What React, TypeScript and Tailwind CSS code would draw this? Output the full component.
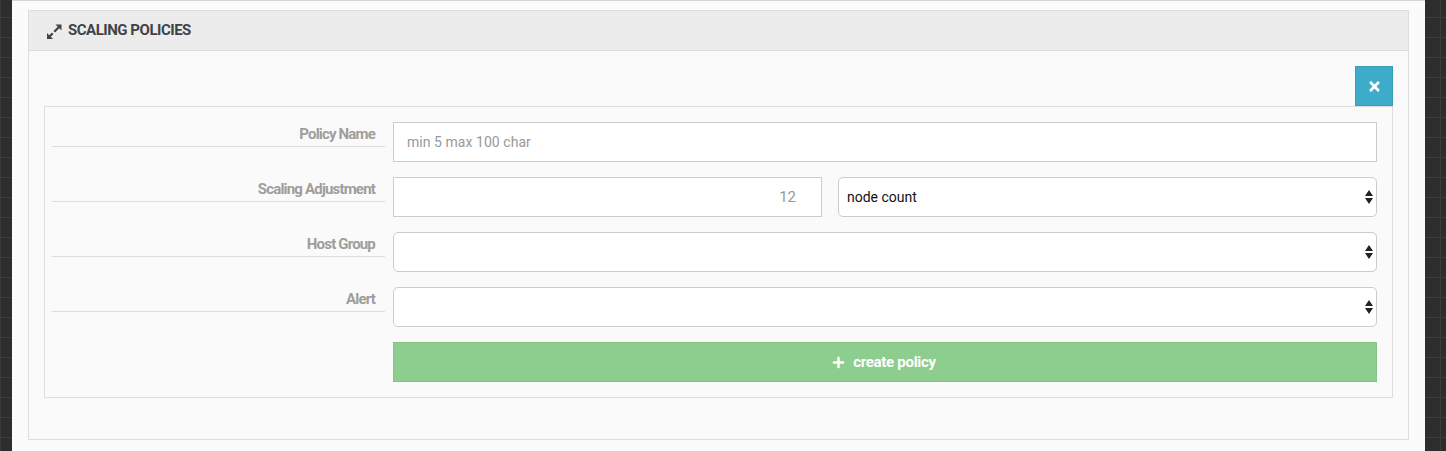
import { FaTimes, FaPlus } from "react-icons/fa";

function Arrows() {
  return (
    <svg className="block translate-y-[0.5px]" width="16" height="16" viewBox="0 0 16 16" fill="none">
      <path d="M9.5 1H15.5V7L13.3 4.8 4.8 13.3 7 15.5H1V9.5L3.2 11.7 11.7 3.2z" fill="#444" />
      <path d="M5.5 7 9 10.5" stroke="#ececec" strokeWidth="2.2" />
    </svg>
  );
}

function Label({ children }: { children: string }) {
  return (
    <div className="w-[333px] h-[25px] shrink-0 border-b border-[#ddd] pr-[10px] text-right text-[15px] leading-[24px] font-bold text-[#a09e9b] tracking-[-0.82px]">
      {children}
    </div>
  );
}

function Select({ value, className }: { value?: string; className: string }) {
  return (
    <div className={"relative h-10 " + className}>
      <select
        defaultValue={value ?? ""}
        className="block w-full h-full appearance-none bg-white border border-[#ccc] rounded-[5px] pl-2 text-[14px] text-[#111] outline-none"
      >
        <option value={value ?? ""}>{value ?? ""}</option>
      </select>
      <svg className="absolute right-[4px] top-[12px]" width="8" height="16" viewBox="0 0 8 16">
        <path d="M4 1 8 7H0zM0 9h8l-4 6z" fill="#222" />
      </svg>
    </div>
  );
}

export default function App() {
  return (
    <div
      className="h-[451px] overflow-hidden px-[12px] bg-[#2d2d2d] bg-[linear-gradient(#3c3c3c_1px,transparent_1px),linear-gradient(90deg,#3a3a3a_1px,transparent_1px)] bg-[size:20px_20px] bg-[position:0_17px]"
      style={{ fontFamily: "Roboto, sans-serif" }}
    >
      <div className="w-[1413px] h-[451px] bg-[#fbfbfb] border-t border-[#d5d5d5] pt-[9px] pl-[16px]">
        <div className="w-[1381px] h-[430px] border border-[#ddd] bg-[#fafafa]">
          <div className="h-[40px] flex items-center gap-[6px] pl-[17px] bg-[#ececec] border-b border-[#ddd]">
            <Arrows />
            <span className="text-[15px] font-bold text-[#3f4347] tracking-[-0.48px]">SCALING POLICIES</span>
          </div>
          <div className="pt-[15px] pl-[15px] pr-[15px]">
            <div className="flex justify-end">
              <div className="w-[38px] h-[40px] bg-[#3eacc8] border border-[#3a9db8] flex items-center justify-center text-white">
                <FaTimes size={15} />
              </div>
            </div>
            <div className="h-[292px] border border-[#ddd] pt-[15px] pl-[7px] pr-[15px] flex flex-col gap-[15px]">
              <div className="flex gap-[8px]">
                <Label>Policy Name</Label>
                <input
                  placeholder="min 5 max 100 char"
                  className="h-10 flex-1 bg-white border border-[#ccc] px-[13px] text-[14px] tracking-[0.05px] placeholder:text-[#999] outline-none"
                />
              </div>
              <div className="flex gap-[8px]">
                <Label>Scaling Adjustment</Label>
                <div className="flex-1 flex gap-[16px]">
                  <input
                    readOnly
                    value="12"
                    className="h-10 w-[429px] bg-white border border-[#ccc] pr-[25px] text-right text-[15px] text-[#999] outline-none"
                  />
                  <Select value="node count" className="flex-1" />
                </div>
              </div>
              <div className="flex gap-[8px]">
                <Label>Host Group</Label>
                <Select className="flex-1" />
              </div>
              <div className="flex gap-[8px]">
                <Label>Alert</Label>
                <Select className="flex-1" />
              </div>
              <div className="flex gap-[8px]">
                <div className="w-[333px] shrink-0" />
                <button className="h-10 flex-1 bg-[#8dce8f] border border-[#84c486] pr-[2px] flex items-center justify-center gap-[8px] text-white text-[15px] font-bold tracking-[-0.3px]">
                  <FaPlus size={13} />
                  create policy
                </button>
              </div>
            </div>
          </div>
        </div>
      </div>
    </div>
  );
}
